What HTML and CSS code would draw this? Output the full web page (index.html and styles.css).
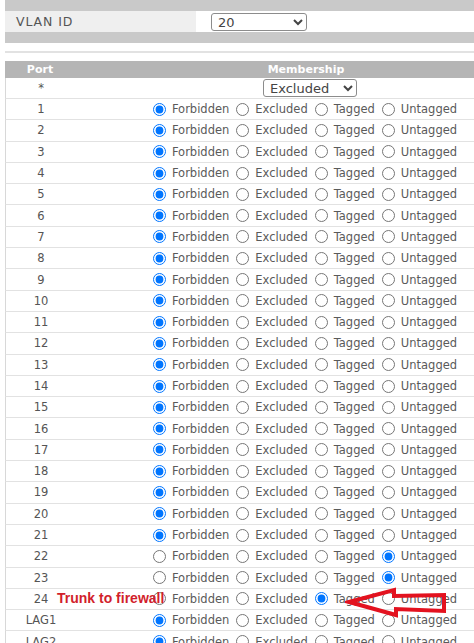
FILE: index.html
```html
<!DOCTYPE html>
<html>
<head>
<meta charset="utf-8">
<link rel="stylesheet" href="styles.css">
</head>
<body>
<div class="page">
  <div class="band"></div>
  <div class="vlan-row">
    <div class="vlan-label">VLAN ID</div>
    <div class="vlan-value">
      <select class="sel sel-vlan"><option>20</option></select>
    </div>
  </div>
  <div class="band"></div>
  <div class="sep"></div>

  <div class="ports">
    <div class="row head">
      <div class="c-port">Port</div>
      <div class="c-mem">Membership</div>
    </div>
    <div class="row all">
      <div class="c-port">*</div>
      <div class="c-mem"><select class="sel sel-all"><option>Excluded</option></select></div>
    </div>
    <div id="rows"></div>
  </div>

  <div class="note">Trunk to firewall</div>
  <svg class="arrow" width="110" height="40" viewBox="0 0 110 40">
    <polygon points="4,21 49,9 49,15 99,14 99,30 51,28 51,34" fill="none" stroke="#e3121f" stroke-width="4" stroke-linejoin="miter"/>
  </svg>
</div>
<script src="app.js"></script>
</body>
</html>
```
FILE: app.js
```js
var ports = [];
for (var i = 1; i <= 24; i++) ports.push(String(i));
ports.push("LAG1", "LAG2");
var sel = {"22": 3, "23": 3, "24": 2};
var labels = ["Forbidden", "Excluded", "Tagged", "Untagged"];
var html = "";
ports.forEach(function (p) {
  var s = sel[p] !== undefined ? sel[p] : 0;
  html += '<div class="row"><div class="c-port">' + p + '</div><div class="c-mem"><div class="opts">';
  labels.forEach(function (l, k) {
    html += '<label class="opt"><input type="radio" name="m' + p + '"' + (k === s ? ' checked' : '') + '><span>' + l + '</span></label>';
  });
  html += '</div></div></div>';
});
document.getElementById("rows").innerHTML = html;
```
FILE: styles.css
```css
html, body {
  margin: 0;
  padding: 0;
  overflow: hidden;
  background: #fff;
}
body {
  font-family: "DejaVu Sans", sans-serif;
  color: #555;
}
.page {
  position: relative;
  width: 532px;
  padding-left: 5px;
}
.band {
  height: 11px;
  background: #c9c9c9;
}
.vlan-row {
  display: grid;
  grid-template-columns: 191px 1fr;
  height: 21px;
}
.vlan-label {
  background: #efefef;
  padding-left: 11px;
  font-size: 12.5px;
  letter-spacing: 0.9px;
  display: flex;
  align-items: center;
  color: #555;
}
.vlan-value {
  padding-left: 15px;
  display: flex;
  align-items: center;
}
.sel {
  font-family: "DejaVu Sans", sans-serif;
  font-size: 13px;
  color: #444;
  height: 18px;
  padding: 0 2px;
  box-sizing: border-box;
  border: 1px solid #8c8c8c;
  border-radius: 3px;
  background-color: #fff;
}
.sel-vlan { width: 96px; }
.sel-all { width: 94px; margin-left: 6px; }
.sep {
  margin-top: 8px;
  height: 2px;
  background: #e2e2e2;
  margin-bottom: 8px;
}
.ports {
  width: 532px;
}
.row {
  display: grid;
  grid-template-columns: 70px 462px;
  box-sizing: border-box;
  height: 21.3px;
  border-bottom: 1px solid #e2e2e2;
  border-left: 1px solid #d8d8d8;
  font-size: 11.5px;
}
.row > div {
  display: flex;
  align-items: center;
  justify-content: center;
}
.row.head {
  height: 17px;
  background: #b5b5b5;
  border: none;
  color: #fff;
  font-weight: bold;
  font-size: 11px;
}
.row.all {
  height: 21px;
}
.c-port {
  color: #555;
}
.head .c-port { color: #fff; }
.opts {
  display: flex;
  align-items: center;
  gap: 7px;
  padding-right: 4px;
}
.opt {
  display: flex;
  align-items: center;
  gap: 6px;
  color: #5a5a5a;
}
.opt input {
  margin: 0;
  width: 13px;
  height: 13px;
}
.note {
  position: absolute;
  left: 57px;
  top: 591px;
  font-family: "Liberation Sans", Arial, sans-serif;
  font-weight: bold;
  font-size: 14px;
  line-height: 14px;
  color: #d21f2c;
}
.arrow {
  position: absolute;
  left: 345px;
  top: 581px;
}
```
